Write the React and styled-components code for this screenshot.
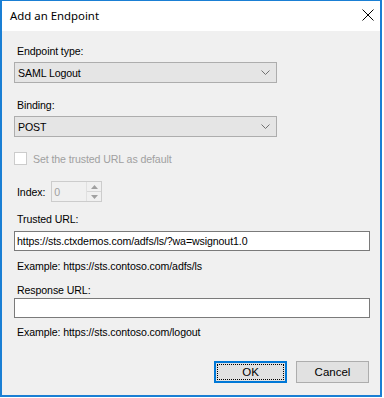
import React from "react";
import styled, { createGlobalStyle } from "styled-components";

const Global = createGlobalStyle`
  html, body { margin: 0; padding: 0; background: #ffffff; }
  body { width: 384px; height: 398px; overflow: hidden; }
`;

const Window = styled.div`
  width: 382px;
  height: 397px;
  box-sizing: border-box;
  border: 2px solid #1a7fd4;
  border-top-width: 1px;
  display: flex;
  flex-direction: column;
  background: #f0f0f0;
`;

const TitleBar = styled.div`
  height: 30px;
  flex: none;
  background: #ffffff;
  display: flex;
  align-items: center;
  justify-content: space-between;
  padding: 0 0 0 8px;
`;

const Title = styled.div`
  font-family: "Noto Sans", sans-serif;
  font-size: 11.4px;
  color: #000;
  margin-top: -2px;
`;

const CloseBtn = styled.div`
  width: 24px;
  height: 30px;
  display: flex;
  align-items: center;
  justify-content: center;
  margin-top: -2px;
`;

const Body = styled.div`
  flex: 1;
  padding: 13px 9px 0 12px;
  display: flex;
  flex-direction: column;
  font-family: "Liberation Sans", Arial, sans-serif;
  font-size: 10.6px;
  letter-spacing: -0.1px;
  color: #000;
`;

const Label = styled.div`
  height: 14px;
  line-height: 14px;
  padding-left: 3px;
  margin-top: ${(p) => p.$mt || 0}px;
  color: ${(p) => (p.$disabled ? "#a0a0a0" : "#000")};
  white-space: nowrap;
`;

const CheckText = styled.span`
  height: 14px;
  line-height: 14px;
  color: #a0a0a0;
  white-space: nowrap;
`;

const Combo = styled.div`
  width: 263px;
  height: 21px;
  box-sizing: border-box;
  margin-top: ${(p) => p.$mt || 0}px;
  background: #e5e5e5;
  border: 1px solid #adadad;
  display: flex;
  align-items: center;
  justify-content: space-between;
  padding: 0 6px 0 3px;
`;

const TextBox = styled.div`
  width: 356px;
  height: 20px;
  box-sizing: border-box;
  margin-top: ${(p) => p.$mt || 0}px;
  background: #ffffff;
  border: 1px solid #7a7a7a;
  display: flex;
  align-items: center;
  padding-left: 2px;
  white-space: nowrap;
`;

const CheckRow = styled.div`
  display: flex;
  align-items: center;
  gap: 6px;
  height: 13px;
  margin-top: ${(p) => p.$mt || 0}px;
`;

const CheckBox = styled.div`
  width: 13px;
  height: 13px;
  box-sizing: border-box;
  border: 1px solid #cccccc;
  background: #ffffff;
`;

const IndexRow = styled.div`
  display: flex;
  align-items: center;
  margin-top: ${(p) => p.$mt || 0}px;
  height: 21px;
`;

const Spin = styled.div`
  margin-left: 6px;
  width: 51px;
  height: 21px;
  box-sizing: border-box;
  border: 1px solid #cccccc;
  background: #f0f0f0;
  display: flex;
  align-items: center;
  justify-content: space-between;
  padding-left: 2px;
  color: #a0a0a0;
`;

const SpinButtons = styled.div`
  width: 15px;
  height: 19px;
  display: flex;
  flex-direction: column;
  border-left: 1px solid #e0e0e0;
  box-sizing: border-box;
`;

const SpinHalf = styled.div`
  flex: 1;
  display: flex;
  align-items: center;
  justify-content: center;
  background: #f0f0f0;
  border-bottom: ${(p) => (p.$top ? "1px solid #d6d6d6" : "none")};
`;

const Buttons = styled.div`
  margin-top: 22px;
  display: flex;
  justify-content: flex-end;
  gap: 9px;
  padding-right: 2px;
`;

const Button = styled.div`
  width: 73px;
  height: 22px;
  box-sizing: border-box;
  background: #e1e1e1;
  border: ${(p) => (p.$default ? "2px solid #0078d7" : "1px solid #adadad")};
  display: flex;
  align-items: center;
  justify-content: center;
  position: relative;
  font-size: 11.5px;
  letter-spacing: 0;
`;

const Focus = styled.div`
  position: absolute;
  inset: 1px;
  border: 1px dotted #000;
`;

const Chevron = () => (
  <svg width="9" height="5" viewBox="0 0 9 5">
    <path d="M0.5 0.5 L4.5 4.5 L8.5 0.5" fill="none" stroke="#707070" strokeWidth="1" />
  </svg>
);

const Arrow = ({ up }) => (
  <svg width="7" height="4" viewBox="0 0 7 4">
    <path d={up ? "M0 4 L3.5 0 L7 4 Z" : "M0 0 L3.5 4 L7 0 Z"} fill="#a0a0a0" />
  </svg>
);

export default function App() {
  return (
    <>
      <Global />
      <Window>
        <TitleBar>
          <Title>Add an Endpoint</Title>
          <CloseBtn>
            <svg width="12" height="12" viewBox="0 0 12 12">
              <path d="M0.5 0.5 L11.5 11.5 M11.5 0.5 L0.5 11.5" stroke="#000" strokeWidth="1" />
            </svg>
          </CloseBtn>
        </TitleBar>
        <Body>
          <Label>Endpoint type:</Label>
          <Combo $mt={4}>
            <span>SAML Logout</span>
            <Chevron />
          </Combo>
          <Label $mt={15}>Binding:</Label>
          <Combo $mt={4}>
            <span>POST</span>
            <Chevron />
          </Combo>
          <CheckRow $mt={15}>
            <CheckBox />
            <CheckText>Set the trusted URL as default</CheckText>
          </CheckRow>
          <IndexRow $mt={16}>
            <Label as="span">Index:</Label>
            <Spin>
              <span>0</span>
              <SpinButtons>
                <SpinHalf $top><Arrow up /></SpinHalf>
                <SpinHalf><Arrow /></SpinHalf>
              </SpinButtons>
            </Spin>
          </IndexRow>
          <Label $mt={10}>Trusted URL:</Label>
          <TextBox $mt={5}>https://sts.ctxdemos.com/adfs/ls/?wa=wsignout1.0</TextBox>
          <Label $mt={8}>Example: https://sts.contoso.com/adfs/ls</Label>
          <Label $mt={10}>Response URL:</Label>
          <TextBox $mt={1}></TextBox>
          <Label $mt={7}>Example: https://sts.contoso.com/logout</Label>
          <Buttons>
            <Button $default>
              <Focus />
              OK
            </Button>
            <Button>Cancel</Button>
          </Buttons>
        </Body>
      </Window>
    </>
  );
}
